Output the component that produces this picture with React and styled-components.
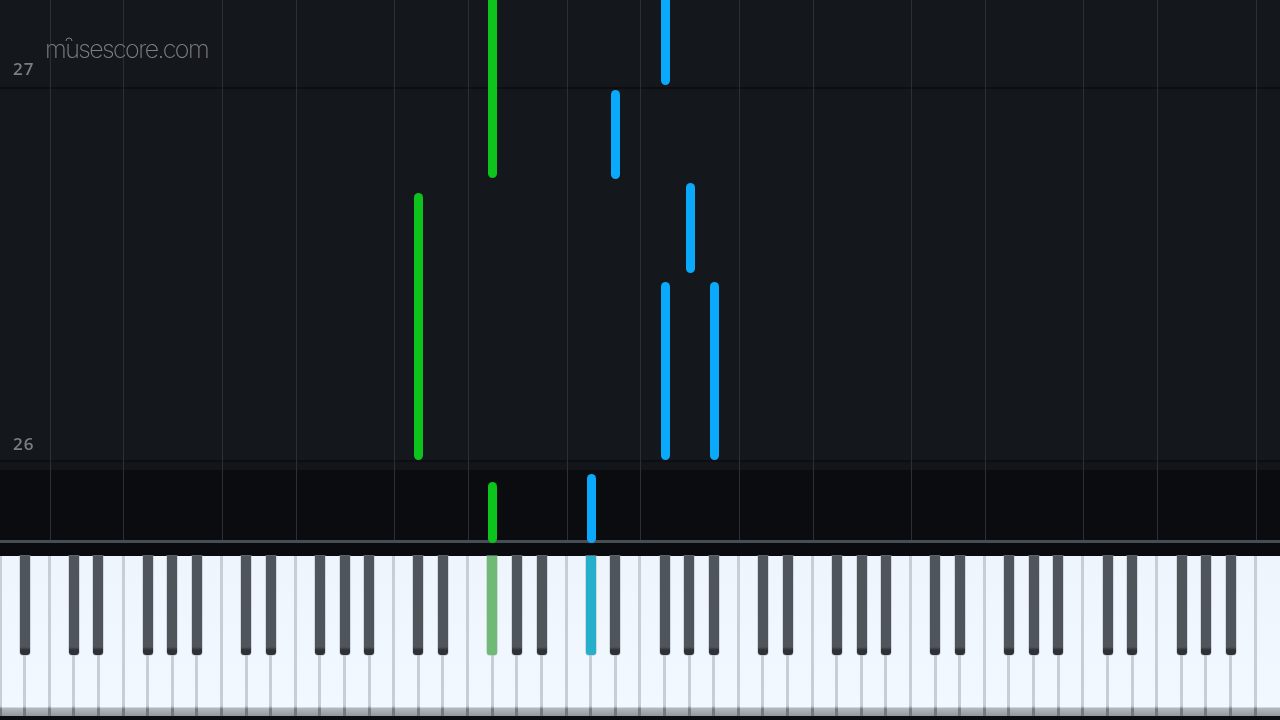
import React from 'react';
import styled, { createGlobalStyle } from 'styled-components';

const GlobalStyle = createGlobalStyle`
  html, body {
    margin: 0;
    padding: 0;
    background: #0c0e12;
    overflow: hidden;
  }
`;

const WHITE_COUNT = 52;
const KEY_W = 1280 / WHITE_COUNT;

// separators that carry a black key, A0 up to C8
const blackSeps = [1];
for (let oct = 0; oct < 7; oct++) {
  const base = 3 + oct * 7;
  [0, 1, 3, 4, 5].forEach(n => blackSeps.push(base + n));
}

const gridSeps = [2, 5, 9, 12, 16, 19, 23, 26, 30, 33, 37, 40, 44, 47, 51];

const notes = [
  { x: 488, top: -4, h: 182, color: 'green' },
  { x: 660.5, top: -4, h: 89, color: 'blue' },
  { x: 611, top: 90, h: 89, color: 'blue' },
  { x: 685.5, top: 183, h: 90, color: 'blue' },
  { x: 414, top: 193, h: 267, color: 'green' },
  { x: 660.5, top: 282, h: 178, color: 'blue' },
  { x: 710, top: 282, h: 178, color: 'blue' },
  { x: 488, top: 482, h: 61, color: 'green' },
  { x: 587, top: 474, h: 69, color: 'blue' },
];

const activeKeys = { 20: 'green', 24: 'blue' };

const Stage = styled.div`
  width: 1280px;
  height: 720px;
  display: flex;
  flex-direction: column;
  background: #0c0e12;
  overflow: hidden;
  position: relative;
`;

const Roll = styled.div`
  height: 540px;
  display: flex;
  flex-direction: column;
  background: #14171c;
  position: relative;
  flex-shrink: 0;
`;

const Measure = styled.div`
  height: ${props => props.$height}px;
  display: flex;
  align-items: flex-end;
  padding: 0 0 ${props => props.$pad}px 13px;
  box-sizing: border-box;
  border-bottom: 2px solid #0c0e11;
  flex-shrink: 0;
`;

const MeasureLabel = styled.span`
  font-family: 'Open Sans', 'Noto Sans', sans-serif;
  font-size: 17px;
  line-height: 18px;
  font-weight: 600;
  letter-spacing: 1px;
  color: #7a7e84;
  filter: blur(0.4px);
`;

const Band = styled.div`
  height: 8px;
  background: #121519;
  flex-shrink: 0;
`;

const DimZone = styled.div`
  flex: 1;
  background: #0a0c0f;
`;

const GridLine = styled.div`
  position: absolute;
  top: 0;
  bottom: 0;
  width: 1px;
  background: #2c2f35;
`;

const Note = styled.div`
  position: absolute;
  width: 9px;
  border-radius: 4.5px;
  filter: blur(0.3px);
  background: ${props => (props.$color === 'green' ? '#0cc41c' : '#0aa9fb')};
`;

const Logo = styled.div`
  position: absolute;
  left: 45px;
  top: 34px;
  font-family: 'Inter', 'Liberation Sans', sans-serif;
  font-size: 25px;
  line-height: 30px;
  font-weight: 200;
  letter-spacing: -1.6px;
  color: #7d8187;
  filter: blur(0.3px);
`;

const LogoCaret = styled.svg`
  position: absolute;
  left: 20px;
  top: 2px;
`;

const Rail = styled.div`
  height: 3px;
  background: #474d55;
  flex-shrink: 0;
`;

const RailGap = styled.div`
  height: 13px;
  background: #090b0f;
  flex-shrink: 0;
`;

const Keyboard = styled.div`
  height: 160px;
  display: flex;
  position: relative;
  flex-shrink: 0;
  filter: blur(0.4px);
`;

const WhiteKey = styled.div`
  flex: 1;
  position: relative;
  background: linear-gradient(
    to bottom,
    #eff5fd 0,
    #f2f8ff 151px,
    #b4b8bf 152px,
    #93979e 160px
  );

  &::before {
    content: '';
    position: absolute;
    left: -1.5px;
    top: 0;
    bottom: 0;
    width: 3px;
    background: linear-gradient(
      to bottom,
      #c9ced5 0,
      #c9ced5 150px,
      #74787f 153px,
      #74787f 160px
    );
    z-index: 1;
  }
`;

const BlackKey = styled.div`
  position: absolute;
  top: 0;
  width: 10px;
  height: 99px;
  margin-left: -5px;
  box-sizing: border-box;
  border-radius: 0 0 3px 3px;
  box-shadow: 0 0 0 0.5px #b4b9c0;
  z-index: 2;
  background: ${props =>
    props.$active === 'green'
      ? '#6fba75'
      : props.$active === 'blue'
        ? '#25afca'
        : 'linear-gradient(to bottom, #4f555b 0, #4f555b 91px, #2e3136 94px, #2e3136 99px)'};
`;

const Piano = () => (
  <Keyboard>
    {Array.from({ length: WHITE_COUNT }, (_, i) => (
      <WhiteKey key={i} />
    ))}
    {blackSeps.map(sep => (
      <BlackKey key={sep} $active={activeKeys[sep]} style={{ left: sep * KEY_W }} />
    ))}
  </Keyboard>
);

const App = () => (
  <>
    <GlobalStyle />
    <Stage>
      <Roll>
        <Measure $height={89} $pad={9}>
          <MeasureLabel>27</MeasureLabel>
        </Measure>
        <Measure $height={373} $pad={7}>
          <MeasureLabel>26</MeasureLabel>
        </Measure>
        <Band />
        <DimZone />
        {gridSeps.map(sep => (
          <GridLine key={sep} style={{ left: sep * KEY_W + 0.4 }} />
        ))}
        <Logo>
          musescore.com
          <LogoCaret width="8" height="6" viewBox="0 0 8 6">
            <path d="M1 5 A3 3 0 0 1 7 5" fill="none" stroke="#7d8187" strokeWidth="1" />
          </LogoCaret>
        </Logo>
      </Roll>
      <Rail />
      <RailGap />
      <Piano />
      {notes.map((n, i) => (
        <Note key={i} $color={n.color} style={{ left: n.x, top: n.top, height: n.h }} />
      ))}
    </Stage>
  </>
);

export default App;
